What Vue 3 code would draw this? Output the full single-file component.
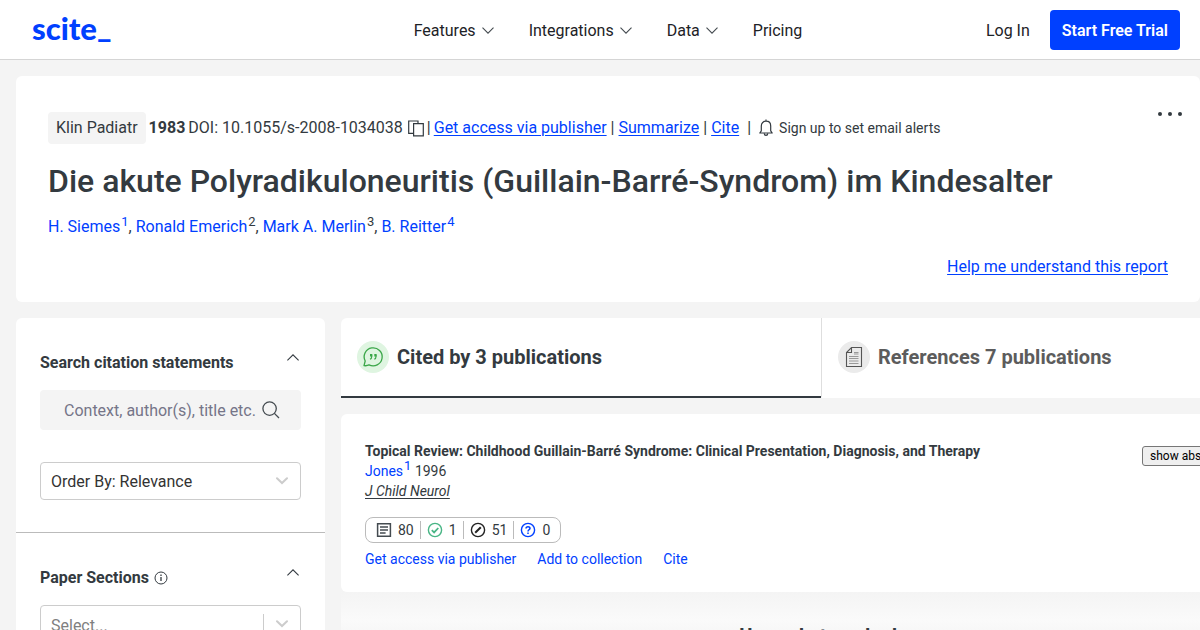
<script setup>
const menu = [
  { label: 'Features', drop: true },
  { label: 'Integrations', drop: true },
  { label: 'Data', drop: true },
  { label: 'Pricing', drop: false },
]
const authors = [
  { name: 'H. Siemes', n: 1, linked: true },
  { name: 'Ronald Emerich', n: 2, linked: false },
  { name: 'Mark A. Merlin', n: 3, linked: false },
  { name: 'B. Reitter', n: 4, linked: true },
]
</script>

<template>
  <div class="page">
    <header class="topbar">
      <a class="logo" href="#">scite<span>_</span></a>
      <nav class="menu">
        <a v-for="m in menu" :key="m.label" href="#">
          {{ m.label }}
          <svg v-if="m.drop" width="12" height="7" viewBox="0 0 12 7"><path d="M0.5 0.7 6 6.2 11.5 0.7" fill="none" stroke="#444b50" stroke-width="1.1" /></svg>
        </a>
      </nav>
      <div class="actions">
        <a href="#">Log In</a>
        <button class="trial" type="button">Start Free Trial</button>
      </div>
    </header>

    <section class="paper">
      <div class="meta">
        <span class="journal">Klin Padiatr</span>
        <b>1983</b>
        <span>DOI: 10.1055/s-2008-1034038</span>
        <button class="icon copy" type="button" aria-label="Copy DOI">
          <svg width="16" height="17" viewBox="0 0 16 17" fill="none" stroke="#333a40" stroke-width="1.2"><path d="M5 13.4H0.7V1H10V3.5" /><path d="M5.6 3.7H15.3V15.9H5.6Z" /></svg>
        </button>
        <span>|</span>
        <a href="#">Get access via publisher</a>
        <span class="sep">|</span>
        <a href="#">Summarize</a>
        <span class="sep">|</span>
        <a href="#">Cite</a>
        <span class="bar">|</span>
        <button class="icon alerts" type="button">
          <svg width="14" height="18" viewBox="0 0 14 18" fill="none" stroke="#333a40" stroke-width="1.2"><path d="M7 0.5V2M0.8 14H13.2L11.7 11.8V7C11.7 4 9.6 2.2 7 2.2S2.3 4 2.3 7V11.8Z" stroke-linejoin="round" /><path d="M5.2 14.4C5.4 17 8.6 17 8.8 14.4" /></svg>
          Sign up to set email alerts
        </button>
      </div>
      <button class="icon more" type="button" aria-label="More">
        <svg width="26" height="6" viewBox="0 0 26 6" fill="#333a40"><circle cx="2" cy="3" r="2" /><circle cx="12" cy="3" r="2" /><circle cx="22" cy="3" r="2" /></svg>
      </button>
      <h1>Die akute Polyradikuloneuritis (Guillain-Barré-Syndrom) im Kindesalter</h1>
      <p class="authors">
        <span v-for="(a, i) in authors" :key="a.name"><a href="#">{{ a.name }}</a><sup :class="{ linked: a.linked }">{{ a.n }}</sup><template v-if="i < 3">, </template></span>
      </p>
      <p class="help"><a href="#">Help me understand this report</a></p>
    </section>

    <div class="columns">
      <aside class="filters">
        <section>
          <h2>
            <label for="search">Search citation statements</label>
            <button class="icon toggle" type="button" aria-label="Collapse search">
              <svg width="12" height="7" viewBox="0 0 12 7"><path d="M0.4 6.4 6 0.8 11.6 6.4" fill="none" stroke="#333a40" stroke-width="1.1" /></svg>
            </button>
          </h2>
          <div class="search">
            <input id="search" type="text" placeholder="Context, author(s), title etc." />
            <svg width="18" height="18" viewBox="0 0 18 18" fill="none" stroke="#444b50" stroke-width="1.3"><circle cx="7.6" cy="7.6" r="6.7" /><path d="M12.4 12.4 17 17" /></svg>
          </div>
          <div class="drop">
            <select aria-label="Order"><option>Order By: Relevance</option></select>
            <svg width="12" height="8" viewBox="0 0 12 8"><path d="M1 1.2 6 6 11 1.2" fill="none" stroke="#ccc" stroke-width="2" stroke-linecap="round" /></svg>
          </div>
        </section>
        <section>
          <h2>
            <label for="sections">Paper Sections</label>
            <svg width="14" height="14" viewBox="0 0 14 14" fill="none" stroke="#333a40"><circle cx="7" cy="7" r="6" /><path d="M7 6V10M7 3.6V4.9" stroke-width="1.3" /></svg>
            <button class="icon toggle" type="button" aria-label="Collapse sections">
              <svg width="12" height="7" viewBox="0 0 12 7"><path d="M0.4 6.4 6 0.8 11.6 6.4" fill="none" stroke="#333a40" stroke-width="1.1" /></svg>
            </button>
          </h2>
          <div class="drop split">
            <select id="sections"><option>Select...</option></select>
            <svg width="12" height="8" viewBox="0 0 12 8"><path d="M1 1.2 6 6 11 1.2" fill="none" stroke="#ccc" stroke-width="2" stroke-linecap="round" /></svg>
          </div>
        </section>
      </aside>

      <main class="results">
        <div class="tabs">
          <button class="tab active" type="button">
            <svg width="32" height="32" viewBox="0 0 32 32" fill="none"><circle cx="16" cy="16" r="16" fill="#dff5e1" /><path d="M7 24.6 8.2 20A9 9 0 1 1 12 23.8C10.5 24.8 9 24.9 7 24.6Z" stroke="#3aa648" stroke-width="1.3" stroke-linejoin="round" /><path d="M14.7 13.6V15.4C14.7 17 14 17.8 13 18.3M19 13.6V15.4C19 17 18.3 17.8 17.3 18.3" stroke="#3aa648" stroke-width="1.2" /><path d="M13 13H15.2V15.6H13ZM17.3 13H19.5V15.6H17.3Z" fill="#3aa648" /></svg>
            Cited by 3 publications
          </button>
          <button class="tab" type="button">
            <svg width="32" height="32" viewBox="0 0 32 32" fill="none"><circle cx="16" cy="16" r="16" fill="#ebebeb" /><path d="M13.5 6.5H23.5V25.5H8.5V11.5ZM13.5 6.5V11.5H8.5" stroke="#555" stroke-width="1.1" /><path d="M16 11.5H20.5M16 13H20.5M11 15.5H20.5M11 17.5H20.5M11 20H20.5M11 22.5H20.5" stroke="#999" /></svg>
            References 7 publications
          </button>
        </div>

        <article class="card">
          <div class="entry">
            <h3>Topical Review: Childhood Guillain-Barré Syndrome: Clinical Presentation, Diagnosis, and Therapy</h3>
            <p class="byline"><a href="#">Jones</a><sup class="linked">1</sup> 1996</p>
            <p class="source"><a href="#">J Child Neurol</a></p>
            <div class="tally">
              <span>
                <svg width="16" height="16" viewBox="0 0 16 16" fill="none" stroke="#444b50" stroke-width="1.5"><path d="M1.6 1.8H14.4V14.2H1.6Z" /><path d="M4 5H12M4 8H12M4 11H9.6" stroke-width="1.4" /></svg>80
              </span>
              <span>
                <svg width="16" height="16" viewBox="0 0 16 16" fill="none" stroke="#48b585" stroke-width="1.4"><circle cx="8" cy="8" r="6.6" /><path d="M4.8 8.2 7.1 10.4 11.3 6" stroke-width="1.8" /></svg>1
              </span>
              <span>
                <svg width="16" height="16" viewBox="0 0 16 16" fill="none" stroke="#222" stroke-width="1.4"><circle cx="8" cy="8" r="6.6" /><path d="M5.2 10.8 10.8 5.2" stroke-width="2" /></svg>51
              </span>
              <span>
                <svg width="16" height="16" viewBox="0 0 16 16" fill="none" stroke="#0040ff" stroke-width="1.4"><circle cx="8" cy="8" r="6.6" /><path d="M6 6.6C6 4 10.1 4.1 10 6.4C9.9 7.8 8 7.8 8 9.4M8 10.4V12" stroke-width="1.5" /></svg>0
              </span>
            </div>
            <div class="links">
              <a href="#">Get access via publisher</a>
              <a href="#">Add to collection</a>
              <a href="#">Cite</a>
            </div>
          </div>
          <button class="abstract" type="button">show abstract</button>
        </article>

        <div class="upsell"><h2>Upgrade to unlock</h2></div>
      </main>
    </div>
  </div>
</template>

<style>
body {
  background: #f4f4f4;
  overflow: hidden;
}
</style>

<style scoped>
* {
  box-sizing: border-box;
}
.page {
  height: 100vh;
  overflow: hidden;
  color: #333a40;
  font: 16px/24px Roboto, "Liberation Sans", sans-serif;
}
h1,
h2,
h3,
p {
  margin: 0;
}
a {
  color: #0040ff;
  text-decoration: none;
}
button,
input,
select {
  font: inherit;
  color: inherit;
}
svg {
  flex: none;
}
.icon {
  display: flex;
  align-items: center;
  padding: 0;
  border: 0;
  background: none;
}
sup {
  margin-left: 1px;
  font-size: 13px;
  line-height: 0;
  vertical-align: 6px;
}
.linked {
  color: #0040ff;
}
.topbar {
  display: grid;
  grid-template-columns: 1fr auto 1fr;
  align-items: center;
  height: 60px;
  padding: 0 20px 0 32px;
  border-bottom: 1px solid #d5d5d5;
  background: #fff;
}
.logo {
  padding-bottom: 4px;
  font: 900 31px/40px Lato, sans-serif;
}
.logo span {
  line-height: 0;
  vertical-align: 3px;
}
.menu {
  display: flex;
  gap: 35px;
  margin-left: 4px;
}
.menu a,
.actions a {
  color: #1d2226;
}
.menu a {
  display: flex;
  align-items: center;
  gap: 6px;
}
.menu,
.actions a {
  padding-top: 2px;
}
.actions {
  display: flex;
  justify-content: flex-end;
  align-items: center;
  gap: 20px;
}
.trial {
  height: 40px;
  padding: 2px 12px 0;
  border: 0;
  border-radius: 4px;
  background: #0040ff;
  color: #fff;
  font-weight: 600;
}
.paper {
  position: relative;
  margin: 16px 0 16px 16px;
  padding: 36px 32px 23px;
  border-radius: 6px;
  background: #fff;
}
.meta {
  display: flex;
  align-items: center;
  gap: 3px;
}
.meta a,
.help a {
  text-decoration: underline;
  text-underline-offset: 2px;
}
.journal {
  padding: 4px 8px;
  border-radius: 4px;
  background: #f4f4f4;
}
.copy {
  margin-left: 2px;
}
.sep {
  margin: 0 1px;
}
.bar {
  margin: 0 5px;
}
.alerts {
  gap: 6px;
  font-size: 14px;
}
.more {
  position: absolute;
  top: 35px;
  right: 16px;
}
h1 {
  margin: 16px 0 13px;
  font-size: 32px;
  font-weight: 500;
  line-height: 42px;
}
.help {
  margin-top: 16px;
  text-align: right;
}
.columns {
  display: flex;
  gap: 16px;
  margin-left: 16px;
}
.filters {
  flex: 0 0 309px;
  min-width: 0;
  border-radius: 6px;
  background: #fff;
}
.filters section {
  padding: 33px 24px 32px;
}
.filters section + section {
  border-top: 1px solid #bbb;
}
.filters h2 {
  display: flex;
  align-items: center;
  gap: 5px;
  margin-bottom: 15px;
  font-size: 16px;
  line-height: 24px;
}
.toggle {
  margin: 0 2px 12px auto;
}
.search {
  display: flex;
  align-items: center;
  height: 40px;
  margin-bottom: 32px;
  padding: 0 21px 0 24px;
  border-radius: 4px;
  background: #f4f4f4;
}
.search input {
  flex: 1;
  min-width: 0;
  padding: 2px 0 0;
  border: 0;
  background: none;
}
.search input::placeholder {
  color: #757588;
}
.drop {
  display: flex;
  align-items: center;
  height: 38px;
  padding-right: 12px;
  border: 1px solid #ccc;
  border-radius: 4px;
}
.drop select {
  flex: 1;
  height: 36px;
  padding: 2px 10px 0;
  border: 0;
  appearance: none;
  background: none;
  color: #333;
}
.drop.split select {
  height: 20px;
  margin-right: 12px;
  border-right: 1px solid #ccc;
  color: #808080;
  line-height: 20px;
}
.results {
  flex: 1 0 960px;
}
.tabs {
  display: grid;
  grid-template-columns: 1fr 1fr;
  margin-bottom: 16px;
}
.tab {
  display: flex;
  align-items: center;
  gap: 8px;
  height: 80px;
  padding: 0 16px;
  border: 0;
  border-bottom: 2px solid #fff;
  background: #fff;
  color: #5c5c5c;
  font-size: 20px;
  font-weight: 700;
}
.tab + .tab {
  border-left: 1px solid #dedede;
}
.active {
  border-bottom-color: #333a40;
  border-top-left-radius: 6px;
  color: #333a40;
}
.card {
  display: grid;
  grid-template-columns: 1fr auto;
  align-items: start;
  padding: 27px 66px 23px 24px;
  border-radius: 6px;
  background: #fff;
  font-size: 14px;
  line-height: 20px;
}
h3 {
  font-size: 14px;
}
.source {
  font-style: italic;
}
.source a {
  color: inherit;
  text-decoration: underline;
  text-underline-offset: 2px;
}
.tally {
  display: inline-flex;
  align-items: center;
  margin: 16px 0 6px;
  padding: 3px 4px;
  border: 1px solid #bbb;
  border-radius: 8px;
  vertical-align: top;
}
.tally span {
  display: flex;
  align-items: center;
  gap: 6px;
  padding: 0 6px;
  line-height: 18px;
}
.tally span + span {
  border-left: 1px solid #bbb;
}
.links {
  display: flex;
  gap: 21px;
}
.abstract {
  min-width: 93px;
  height: 20px;
  margin-top: 5px;
  padding: 0 7px;
  border: 1px solid #767676;
  border-radius: 3px;
  background: #efefef;
  color: #000;
  font-size: 12px;
  line-height: 16px;
  text-align: left;
}
.upsell {
  padding: 32px 0;
  background: linear-gradient(#f4f4f4, #fafafa 28px, #f7f7f7 40px);
  text-align: center;
}
.upsell h2 {
  font-size: 20px;
  line-height: 24px;
}
</style>
